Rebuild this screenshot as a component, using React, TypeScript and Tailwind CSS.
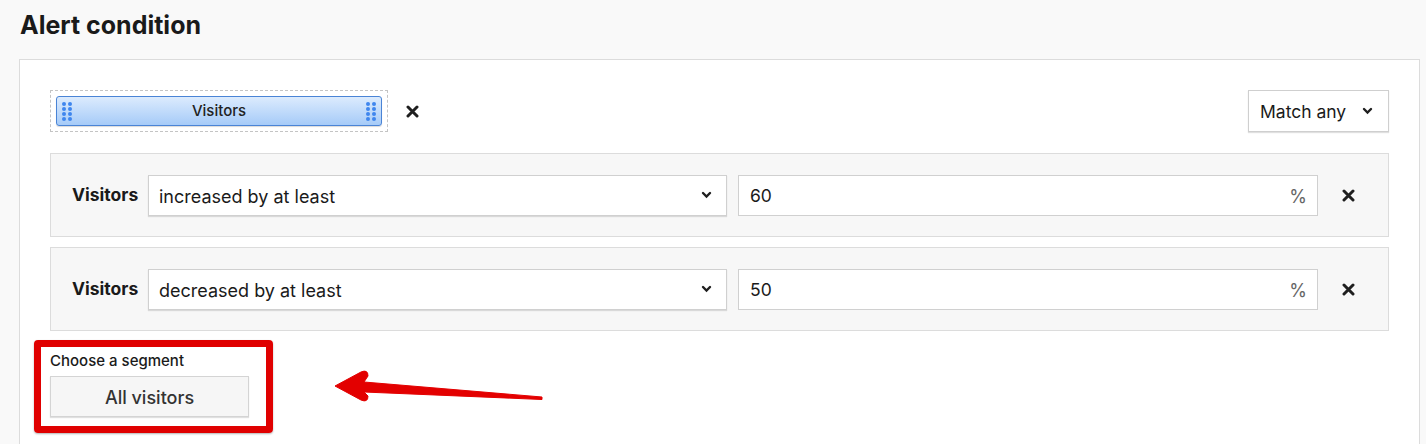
import React from 'react';

const font = { fontFamily: 'Inter, "Noto Sans", "Liberation Sans", sans-serif' };

function CloseIcon() {
  return (
    <svg width="13" height="13" viewBox="0 0 13 13" className="text-[#1f1f1f]">
      <path d="M2 2L11 11M11 2L2 11" stroke="currentColor" strokeWidth="3" strokeLinecap="round" />
    </svg>
  );
}

function Chevron() {
  return (
    <svg width="11" height="8" viewBox="0 0 11 8" className="text-[#1f1f1f]">
      <path d="M2 2L5.5 5.5L9 2" stroke="currentColor" strokeWidth="2.4" fill="none" strokeLinecap="round" />
    </svg>
  );
}

function Grip() {
  return (
    <div className="grid grid-cols-2 gap-x-[1.5px] gap-y-[1px]">
      {Array.from({ length: 8 }).map((_, i) => (
        <span key={i} className="block h-[4px] w-[4px] rounded-full bg-[#3f86ee]" />
      ))}
    </div>
  );
}

function ConditionRow({ op, value }: { op: string; value: string }) {
  return (
    <div className="flex h-[84px] items-center border border-[#dcdcdc] bg-[#f7f7f7] pl-[21px]">
      <span className="w-[76px] pt-[1px] text-[17.5px] font-bold text-[#1a1a1a]">Visitors</span>
      <div className="flex h-[41px] w-[579px] items-center justify-between border border-[#d0d0d0] bg-white pl-[10px] pr-[14px] shadow-[0_1px_1px_rgba(0,0,0,0.12)]">
        <span className="pt-[2px] text-[18px] text-[#1a1a1a]">{op}</span>
        <Chevron />
      </div>
      <div className="ml-[11px] flex h-[41px] w-[580px] items-center justify-between border border-[#d0d0d0] bg-white pl-[11px] pr-[10px]">
        <span className="pt-[2px] text-[17.5px] text-[#1a1a1a]">{value}</span>
        <span className="pt-[2px] text-[18px] text-[#666]">%</span>
      </div>
      <div className="flex w-[60px] justify-center pl-[1px]">
        <CloseIcon />
      </div>
    </div>
  );
}

export default function App() {
  return (
    <div className="relative h-[444px] overflow-hidden bg-[#f9f9f9]" style={font}>
      <h2 className="pl-[20px] pt-[10px] text-[25px] font-bold leading-[30px] text-[#1a1a1a]">Alert condition</h2>

      <div className="ml-[19px] mt-[19px] w-[1401px] border border-[#dcdcdc] bg-white px-[30px] pt-[30px] pb-[40px]">
        {/* Metric + match mode */}
        <div className="flex items-center justify-between">
          <div className="flex items-center">
            <div className="border border-dashed border-[#c4c4c4] p-[5px]">
              <div className="flex h-[30px] w-[326px] items-center justify-between rounded-[3px] border border-[#4a84d6] bg-gradient-to-b from-[#dcebfd] to-[#a6cbf8] px-[5px] shadow-[0_1px_1px_rgba(0,0,0,0.15)]">
                <Grip />
                <span className="pt-[1px] text-[15px] font-medium text-[#222]">Visitors</span>
                <Grip />
              </div>
            </div>
            <div className="ml-[18px] flex">
              <CloseIcon />
            </div>
          </div>
          <div className="flex h-[42px] w-[141px] items-center justify-between border border-[#cfcfcf] bg-white pl-[11px] pr-[15px] shadow-[0_1px_1px_rgba(0,0,0,0.12)]">
            <span className="pt-[2px] text-[17.5px] text-[#1a1a1a]">Match any</span>
            <Chevron />
          </div>
        </div>

        {/* Conditions */}
        <div className="mt-[21px] flex flex-col gap-[10px]">
          <ConditionRow op="increased by at least" value="60" />
          <ConditionRow op="decreased by at least" value="50" />
        </div>

        {/* Segment */}
        <div className="relative mt-[20px] w-[200px]">
          <div className="text-[15px] font-medium leading-[20px] text-[#1a1a1a]">Choose a segment</div>
          <div className="mt-[5px] flex h-[41px] w-[199px] items-center justify-center border border-[#d4d4d4] bg-[#f6f6f6] shadow-[0_1px_1px_rgba(0,0,0,0.12)]">
            <span className="pt-[1px] text-[18px] font-medium text-[#333]">All visitors</span>
          </div>
          {/* annotation box */}
          <div className="pointer-events-none absolute -left-[16px] -top-[11px] h-[93px] w-[239px] rounded-[4px] border-[7px] border-[#e00000] shadow-[0_1px_2px_rgba(0,0,0,0.3)]" />
        </div>
      </div>

      {/* annotation arrow */}
      <svg className="pointer-events-none absolute left-[330px] top-[365px]" width="220" height="42" viewBox="0 0 220 42">
        <path
          d="M5 21 L31 7 Q38 4 38 11 L34 17 L212 32 L212 34.5 L34 27 L38 31 Q38 38 31 35 Z"
          fill="#e30000"
          stroke="#e30000"
          strokeWidth="1"
          strokeLinejoin="round"
        />
      </svg>
    </div>
  );
}
